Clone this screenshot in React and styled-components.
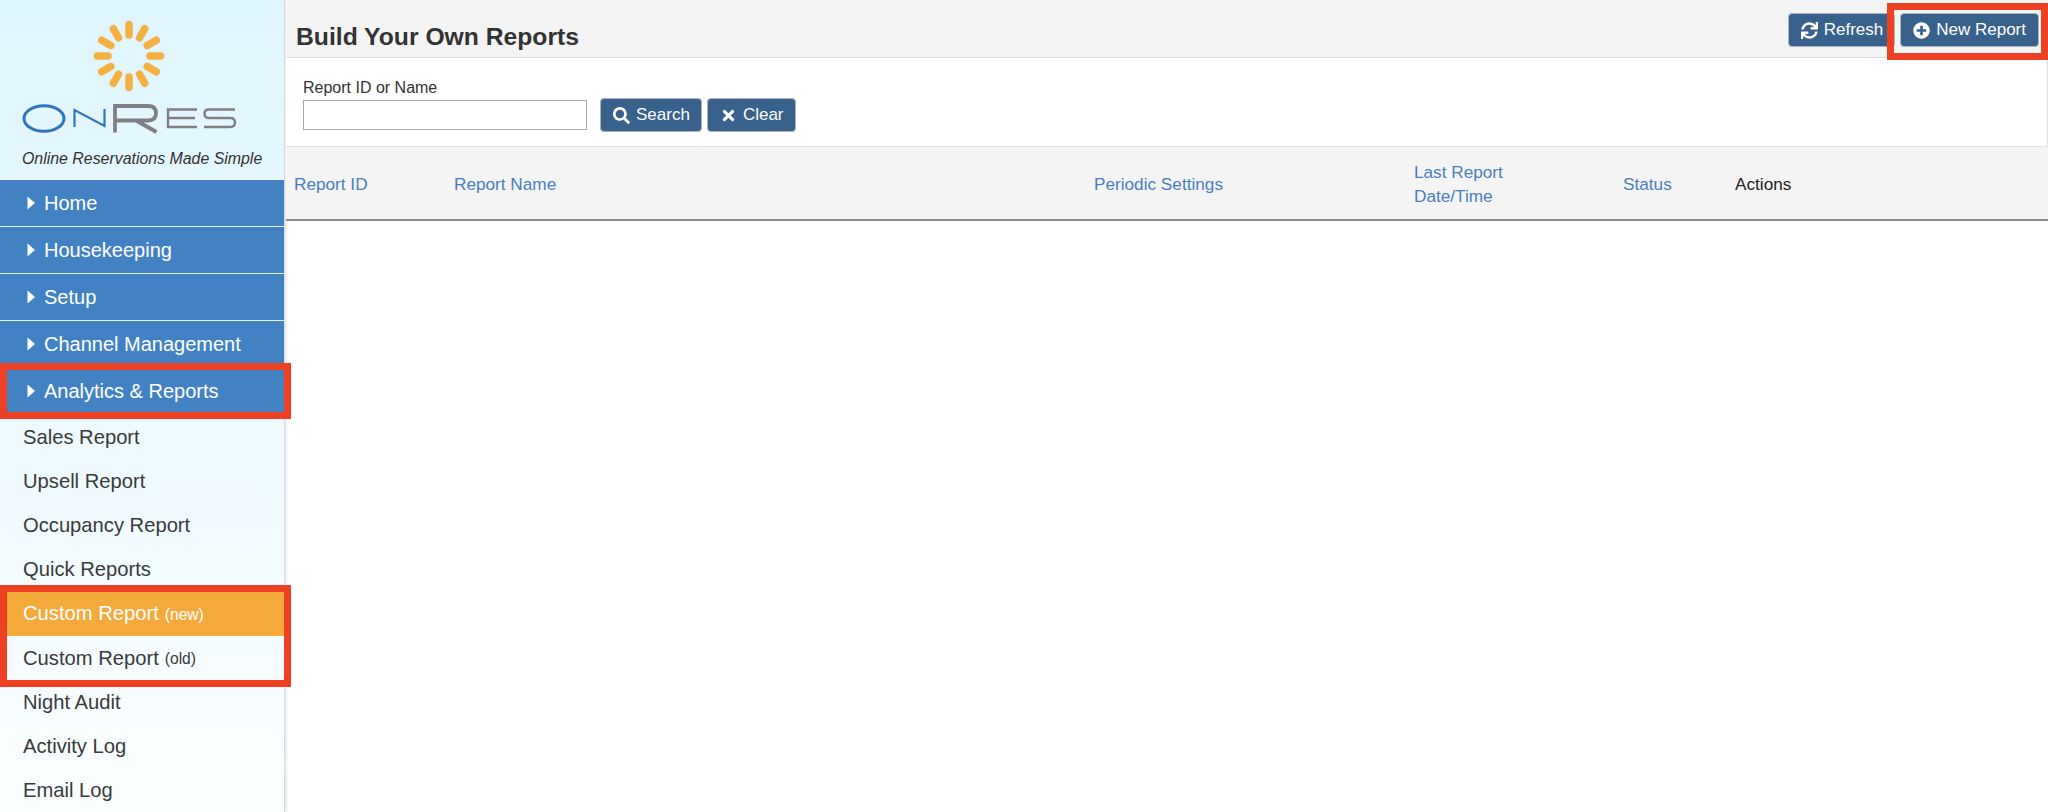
import React from "react";
import styled, { createGlobalStyle } from "styled-components";
import { FaSearch, FaTimes, FaPlusCircle, FaSync } from "react-icons/fa";

const Global = createGlobalStyle`
  html, body { margin: 0; padding: 0; height: 100%; background: #fff; overflow: hidden; }
  body { font-family: "Liberation Sans", Arial, sans-serif; color: #333; }
  * { box-sizing: border-box; }
`;
const Page = styled.div`display: flex; height: 812px; width: 2048px; position: relative; overflow: hidden;`;
const Sidebar = styled.aside`
  width: 285px; flex: none; height: 812px; overflow: hidden;
  background: linear-gradient(180deg, #dff5fd 0%, #fbfeff 100%);
  border-right: 1px solid #d8dcde; box-shadow: 2px 0 2px rgba(0,0,0,.08);
`;
const LogoBlock = styled.div`height: 180px; display: flex; flex-direction: column; align-items: flex-start; padding: 20px 0 0 22px;`;
const Tagline = styled.div`font-style: italic; font-size: 15.9px; color: #333; margin-top: 14px; white-space: nowrap;`;
const Menu = styled.nav`display: flex; flex-direction: column;`;
const MainItem = styled.div`
  height: 47px; background: #4282c3; color: #fff; font-size: 20px;
  display: flex; align-items: center; padding-left: 27px; gap: 9px; border-bottom: 1px solid #e4f3fb;
`;
const Caret = styled.svg`width: 8px; height: 14px; flex: none; fill: #fff;`;
const SubItem = styled.div`
  height: 44.2px; display: flex; align-items: center; padding-left: 23px; font-size: 20.2px;
  color: ${p => (p.$active ? "#fff" : "#3a3a3a")};
  background: ${p => (p.$active ? "#f4a93b" : "transparent")};
  small { font-size: 15.6px; margin-left: 6px; margin-top: 2px; }
`;
const Main = styled.main`flex: 1; min-width: 0; display: flex; flex-direction: column; padding-left: 1px;`;
const Header = styled.header`
  height: 58px; background: #f4f4f4; border-bottom: 1px solid #dedede;
  display: flex; align-items: center; justify-content: space-between; padding: 14px 9px 0 10px;
`;
const Title = styled.h1`margin: 3px 0 0; font-size: 24.7px; font-weight: 700; color: #333;`;
const HeaderActions = styled.div`display: flex; gap: 5px; align-items: center; margin-top: -11px;`;
const Button = styled.button`
  height: 34px; padding: 0 ${p => (p.$wide ? 12 : 11)}px 0 12px; display: inline-flex; align-items: center; gap: 6px;
  background: #38618c; color: #fff; border: 1px solid #a9b4bf; border-radius: 4px;
  font: 17px "Liberation Sans", Arial, sans-serif;
  svg { width: 17px; height: 17px; flex: none; }
`;
const SearchBar = styled.section`
  height: 89px; background: #fff; border-bottom: 1px solid #e2e2e2; border-right: 1px solid #e2e2e2;
  display: flex; align-items: flex-start; padding: 0 0 0 17px; gap: 13px;
`;
const Field = styled.label`display: flex; flex-direction: column; font-size: 16px; color: #333; padding-top: 21px; line-height: 18px;`;
const Input = styled.input`width: 284px; height: 30px; margin-top: 3px; border: 1px solid #a8a8a8; background: #fff; padding: 0; display: block;`;
const SearchButtons = styled.div`display: flex; gap: 5px; padding-top: 40px;`;
const TableHead = styled.div`
  height: 74px; background: #f4f4f4; border-bottom: 2px solid #888; padding-top: 2px;
  display: grid; grid-template-columns: 160px 640px 320px 209px 112px 1fr; align-items: center;
  padding-left: 8px; font-size: 17.2px; line-height: 24.5px;
`;
const HeadLink = styled.div`color: #4a7fbd;`;
const HeadText = styled.div`color: #222;`;
const Mark = styled.div`
  position: absolute; border: 7px solid #ee4023; pointer-events: none;
  left: ${p => p.$x}px; top: ${p => p.$y}px; width: ${p => p.$w}px; height: ${p => p.$h}px;
`;

const Logo = () => (
  <svg width="220" height="116" viewBox="22 20 220 116" style={{ display: "block" }}>
    <g stroke="#f4b141" strokeWidth="7.5" strokeLinecap="round" transform="translate(129 56)">
      {Array.from({ length: 12 }).map((_, i) => {
        const a = (i * 30 * Math.PI) / 180;
        return <line key={i} x1={Math.sin(a) * 21} y1={-Math.cos(a) * 21} x2={Math.sin(a) * 31.5} y2={-Math.cos(a) * 31.5} />;
      })}
    </g>
    <g fill="none">
      <ellipse cx="44" cy="118.5" rx="20" ry="12.8" stroke="#2e75bd" strokeWidth="3" />
      <path d="M74.5 127 V110 L104.5 126 V109" stroke="#2e75bd" strokeWidth="2.2" />
      <path d="M115 132.5 V106 H148 Q156 106 156 113 Q156 120.5 148 120.5 H116 M136 120.5 L156.5 132" stroke="#807f85" strokeWidth="3.8" />
      <path d="M197 109.5 H168 V127 H197 M168 118 H195" stroke="#807f85" strokeWidth="2.4" />
      <path d="M235 109.5 H209 Q204.5 109.5 204.5 113.5 Q204.5 118 209 118 H230 Q235 118 235 122.5 Q235 127 230 127 H204" stroke="#807f85" strokeWidth="2.4" />
    </g>
  </svg>
);

const mains = ["Home", "Housekeeping", "Setup", "Channel Management", "Analytics & Reports"];

export default function App() {
  return (
    <Page>
      <Global />
      <Sidebar>
        <LogoBlock>
          <Logo />
          <Tagline>Online Reservations Made Simple</Tagline>
        </LogoBlock>
        <Menu>
          {mains.map(m => (
            <MainItem key={m}>
              <Caret viewBox="0 0 8 14"><path d="M0.5 0.5 L8 7 L0.5 13.5 Z" /></Caret>
              {m}
            </MainItem>
          ))}
          <SubItem>Sales Report</SubItem>
          <SubItem>Upsell Report</SubItem>
          <SubItem>Occupancy Report</SubItem>
          <SubItem>Quick Reports</SubItem>
          <SubItem $active>Custom Report <small>(new)</small></SubItem>
          <SubItem>Custom Report <small>(old)</small></SubItem>
          <SubItem>Night Audit</SubItem>
          <SubItem>Activity Log</SubItem>
          <SubItem>Email Log</SubItem>
        </Menu>
      </Sidebar>
      <Main>
        <Header>
          <Title>Build Your Own Reports</Title>
          <HeaderActions>
            <Button><FaSync />Refresh</Button>
            <Button $wide><FaPlusCircle />New Report</Button>
          </HeaderActions>
        </Header>
        <SearchBar>
          <Field>Report ID or Name<Input /></Field>
          <SearchButtons>
            <Button><FaSearch />Search</Button>
            <Button><FaTimes />Clear</Button>
          </SearchButtons>
        </SearchBar>
        <TableHead>
          <HeadLink>Report ID</HeadLink>
          <HeadLink>Report Name</HeadLink>
          <HeadLink>Periodic Settings</HeadLink>
          <HeadLink>Last Report<br />Date/Time</HeadLink>
          <HeadLink>Status</HeadLink>
          <HeadText>Actions</HeadText>
        </TableHead>
      </Main>
      <Mark $x={0} $y={363} $w={291} $h={56} />
      <Mark $x={0} $y={585} $w={291} $h={102} />
      <Mark $x={1887} $y={3} $w={161} $h={57} />
    </Page>
  );
}
